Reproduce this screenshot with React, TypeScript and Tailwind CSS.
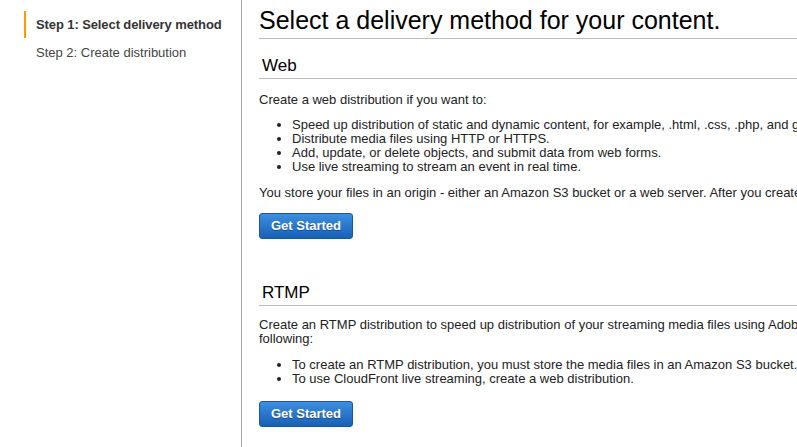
const webItems = [
  "Speed up distribution of static and dynamic content, for example, .html, .css, .php, and graphics files.",
  "Distribute media files using HTTP or HTTPS.",
  "Add, update, or delete objects, and submit data from web forms.",
  "Use live streaming to stream an event in real time.",
];

const rtmpItems = [
  "To create an RTMP distribution, you must store the media files in an Amazon S3 bucket.",
  "To use CloudFront live streaming, create a web distribution.",
];

function GetStarted({ className = "" }: { className?: string }) {
  return (
    <button
      className={`block w-[94px] h-[26px] rounded-[3px] border border-[#1b5799] bg-gradient-to-b from-[#3d8fe0] to-[#1760b6] text-white text-[13px] font-bold leading-[24px] [text-shadow:0_1px_0_rgba(0,0,0,0.35)] ${className}`}
    >
      Get Started
    </button>
  );
}

export default function App() {
  return (
    <div className="flex w-[797px] h-[447px] overflow-hidden bg-white font-['Liberation_Sans',Arial,sans-serif] text-[#222]">
      {/* Steps sidebar */}
      <aside className="w-[242px] shrink-0 border-r border-[#aaa] pt-[11px] text-[13px]">
        <div className="ml-[24px] border-l-2 border-[#ff9900] pl-[10px] leading-[27px] font-bold text-[#333] tracking-[-0.1px]">
          Step 1: Select delivery method
        </div>
        <div className="ml-[26px] mt-[1px] pl-[10px] leading-[27px] text-[#444]">
          Step 2: Create distribution
        </div>
      </aside>

      {/* Delivery methods */}
      <main className="flex-1 min-w-0 pl-[17px] pt-[6px] overflow-hidden whitespace-nowrap text-[13px]">
        <h1 className="text-[25px] leading-[28px] pb-[4px] border-b border-[#bbb] text-black">
          Select a delivery method for your content.
        </h1>

        <h2 className="mt-[17px] pl-[3px] text-[17px] leading-[20px] pb-[2px] border-b border-[#bbb] text-black">
          Web
        </h2>
        <p className="mt-[13px] leading-[15px]">Create a web distribution if you want to:</p>
        <ul className="mt-[11px] list-disc pl-[33px] leading-[14px]">
          {webItems.map((t) => (
            <li key={t}>{t}</li>
          ))}
        </ul>
        <p className="mt-[11px] leading-[15px]">
          You store your files in an origin - either an Amazon S3 bucket or a web server. After you create the distribution, you can add more origins to the distribution.
        </p>
        <GetStarted className="mt-[13px]" />

        <h2 className="mt-[44px] pl-[3px] text-[17px] leading-[20px] pb-[2px] border-b border-[#bbb] text-black">
          RTMP
        </h2>
        <p className="mt-[12px] leading-[14px]">
          Create an RTMP distribution to speed up distribution of your streaming media files using Adobe Flash Media Server's RTMP protocol. Note the
          <br />
          following:
        </p>
        <ul className="mt-[12px] list-disc pl-[33px] leading-[14px]">
          {rtmpItems.map((t) => (
            <li key={t}>{t}</li>
          ))}
        </ul>
        <GetStarted className="mt-[15px]" />
      </main>
    </div>
  );
}
